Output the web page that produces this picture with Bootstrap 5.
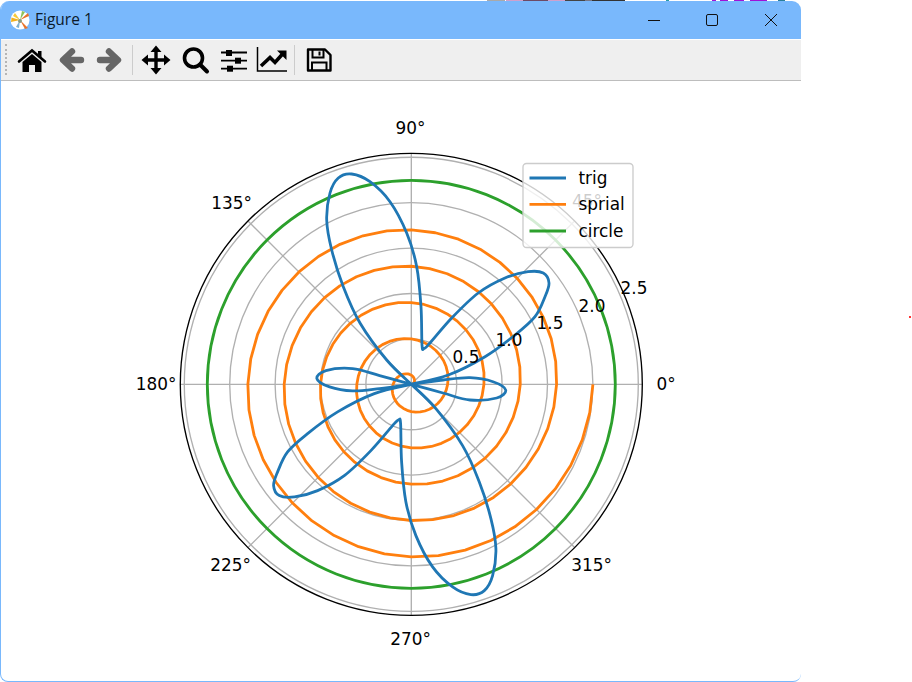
<!DOCTYPE html>
<html lang="en">
<head>
    <meta charset="UTF-8">
    <title>Figure 1</title>
    <link href="https://cdn.jsdelivr.net/npm/bootstrap@5.3.0/dist/css/bootstrap.min.css" rel="stylesheet">
    <style>
        body { margin: 0; background: #fff; overflow: hidden; }
        .desk-strip { display: block; width: 912px; height: 2px; }
        .fig-window { width: 801px; height: 681px; margin-top: -1px; position: relative; background: #fff; border-radius: 9px 9px 8px 8px; overflow: hidden; border-left: 1px solid #79b8fc; border-bottom: 1px solid #79b8fc; }
        .fig-title { height: 38px; margin-left: -1px; background: #79b8fc; font-family: "Open Sans", "Noto Sans", sans-serif; font-size: 15.5px; color: #0c1a2a; }
        .fig-logo { margin-left: 10px; margin-right: 5px; }
        .win-btn { width: 58.5px; height: 38px; }
        .win-btns { margin-right: 1px; }
        .fig-tools { height: 42px; background: #efefef; border-top: 1px solid #fff; border-bottom: 1px solid #bdbdbd; padding-left: 4px; padding-bottom: 1px; }
        .grip { width: 2px; height: 31px; margin-right: 6px; border-left: 2px dotted #b5b5b5; }
        .tool-sep { width: 1px; height: 30px; background: #ccc; flex: none; }
        .tool-icon { display: block; height: 39px; flex: none; }
        .plot-area { display: block; }
        .plot-area text { font-family: "DejaVu Sans", sans-serif; font-size: 16.9px; fill: #000; }
        .grid-line { stroke: #b0b0b0; stroke-width: 1.35; fill: none; }
        .red-speck { position: absolute; left: 909px; top: 316px; width: 2px; height: 2px; background: #f33; }
    </style>
</head>

<body>
<svg class="desk-strip" viewBox="0 0 912 2">
    <rect x="487" width="18" height="2" fill="#a9a9a9"/>
    <rect x="506" width="18" height="2" fill="#cfa0cc"/>
    <rect x="523" width="25" height="2" fill="#6d4a66"/>
    <rect x="548" width="17" height="2" fill="#cfa0cc"/>
    <rect x="565" width="20" height="2" fill="#444"/>
    <rect x="585" width="7" height="2" fill="#778"/>
    <rect x="592" width="33" height="2" fill="#333"/>
    <rect x="666" width="3" height="2" fill="#2a9aa8"/>
    <rect x="712" width="4" height="2" fill="#a012d8"/>
    <rect x="720" width="8" height="2" fill="#a012d8"/>
    <rect x="734" width="10" height="2" fill="#a012d8"/>
    <rect x="750" width="17" height="2" fill="#a012d8"/>
    <rect x="778" width="7" height="2" fill="#2a7f9a"/>
</svg>
<div class="red-speck"></div>

<div class="fig-window">
    <div class="fig-title d-flex align-items-center">
        <svg class="fig-logo" width="20" height="20" viewBox="0 0 20 20">
            <circle cx="10" cy="10" r="9.5" fill="#fff"/>
            <path d="M10 10 1.5 7.5 1 12Z" fill="#f2b01e"/>
            <path d="M10 10 5 3 3 6Z" fill="#f5c93c"/>
            <path d="M10 10 12 1 15 2Z" fill="#8fc25b"/>
            <path d="M10 10 18 3 19 6Z" fill="#e8732a"/>
            <path d="M10 10 18 18 15 19Z" fill="#e8732a"/>
            <path d="M10 10 6 17 9 18Z" fill="#7fb0d0"/>
            <circle cx="10" cy="11" r="2" fill="#8a9a80"/>
        </svg>
        <span>Figure 1</span>
        <div class="win-btns ms-auto d-flex">
            <div class="win-btn d-flex align-items-center justify-content-center">
                <svg width="14" height="14" viewBox="0 0 14 14"><path d="M1 7.5H13" stroke="#111" stroke-width="1"/></svg>
            </div>
            <div class="win-btn d-flex align-items-center justify-content-center">
                <svg width="14" height="14" viewBox="0 0 14 14"><rect x="1.5" y="1.5" width="11" height="11" rx="1.5" fill="none" stroke="#111" stroke-width="1"/></svg>
            </div>
            <div class="win-btn d-flex align-items-center justify-content-center">
                <svg width="14" height="14" viewBox="0 0 14 14"><path d="M1 1 13 13M13 1 1 13" stroke="#111" stroke-width="1"/></svg>
            </div>
        </div>
    </div>

    <div class="fig-tools d-flex align-items-center">
        <div class="grip"></div>
        <svg class="tool-icon" width="38" viewBox="13 41 38 39">
            <path d="M19 62.5 32 51.5 45 62.5" fill="none" stroke="#000" stroke-width="2.6" stroke-linecap="round"/>
            <path d="M38 52h3.5v6.5L38 55.5Z" fill="#000"/>
            <path d="M32 55 41.5 63V73H35V66H29V73H22.5V63Z" fill="#000"/>
        </svg>
        <svg class="tool-icon" width="39" viewBox="51 41 39 39">
            <path d="M81 61H64M72 52.5 63 61 72 69.5" fill="none" stroke="#666" stroke-width="6.4" stroke-linecap="round" stroke-linejoin="round"/>
        </svg>
        <svg class="tool-icon" width="42" viewBox="90 41 42 39">
            <path d="M100 61H117M109 52.5 118 61 109 69.5" fill="none" stroke="#666" stroke-width="6.4" stroke-linecap="round" stroke-linejoin="round"/>
        </svg>
        <div class="tool-sep"></div>
        <svg class="tool-icon" width="42" viewBox="133 41 42 39">
            <path d="M156 50V72M145 61H167" stroke="#000" stroke-width="3.4"/>
            <path d="M156 46.5 161.5 53H150.5ZM156 75.5 161.5 69H150.5ZM141.5 61 148 55.5V66.5ZM170.5 61 164 55.5V66.5Z" fill="#000"/>
        </svg>
        <svg class="tool-icon" width="39" viewBox="175 41 39 39">
            <circle cx="193.5" cy="59" r="9" fill="none" stroke="#000" stroke-width="3.6"/>
            <path d="M200 65.5 207 72.5" stroke="#000" stroke-width="4" stroke-linecap="round"/>
        </svg>
        <svg class="tool-icon" width="39" viewBox="214 41 39 39">
            <path d="M221 53.5H247M221 61.7H247M221 69.7H247" stroke="#000" stroke-width="1.8"/>
            <rect x="226" y="51" width="6" height="6" fill="#000"/>
            <rect x="235" y="58.7" width="6" height="6" fill="#000"/>
            <rect x="227" y="66.7" width="6" height="6" fill="#000"/>
        </svg>
        <svg class="tool-icon" width="41" viewBox="253 41 41 39">
            <path d="M257.5 48V72H287" fill="none" stroke="#000" stroke-width="1.5"/>
            <path d="M261 67 270 58.5 275 63.5 283 54.5" fill="none" stroke="#000" stroke-width="3.6"/>
            <path d="M277 51.5H286.5V61Z" fill="#000"/>
        </svg>
        <div class="tool-sep"></div>
        <svg class="tool-icon" width="38" viewBox="295 41 38 39">
            <path d="M308 50.5H325L330.5 56V71.5H308Z" fill="none" stroke="#000" stroke-width="2.4" stroke-linejoin="round"/>
            <path d="M312.5 51V58.5H323.5V51M319.5 52.5V56.5" fill="none" stroke="#000" stroke-width="2"/>
            <path d="M312 71V63.5H326.5V71" fill="none" stroke="#000" stroke-width="2"/>
        </svg>
    </div>

    <svg class="plot-area" width="800" height="599" viewBox="1 81 800 599">
        <g class="grid-line">
            <circle cx="411.3" cy="384.3" r="45.4"/>
            <circle cx="411.3" cy="384.3" r="90.8"/>
            <circle cx="411.3" cy="384.3" r="136.2"/>
            <circle cx="411.3" cy="384.3" r="181.6"/>
            <circle cx="411.3" cy="384.3" r="227"/>
            <path d="M180.3 384.3H642.3M411.3 153.3V615.3M248 221 574.6 547.6M248 547.6 574.6 221"/>
        </g>
        <circle cx="411.3" cy="384.3" r="204" fill="none" stroke="#2ca02c" stroke-width="2.8"/>
        <path id="spiral" fill="none" stroke="#ff7f0e" stroke-width="2.8" stroke-linejoin="round"/>
        <path id="trig" fill="none" stroke="#1f77b4" stroke-width="2.8" stroke-linejoin="round"/>
        <circle cx="411.3" cy="384.3" r="231" fill="none" stroke="#000" stroke-width="1.35"/>

        <text x="410.5" y="134" text-anchor="middle">90°</text>
        <text x="231.5" y="209" text-anchor="middle">135°</text>
        <text x="156" y="390" text-anchor="middle">180°</text>
        <text x="230.5" y="571" text-anchor="middle">225°</text>
        <text x="410.5" y="645" text-anchor="middle">270°</text>
        <text x="591.5" y="571" text-anchor="middle">315°</text>
        <text x="587" y="207" text-anchor="middle">45°</text>
        <text x="666" y="390" text-anchor="middle">0°</text>
        <text x="466" y="363" text-anchor="middle">0.5</text>
        <text x="509" y="345.5" text-anchor="middle">1.0</text>
        <text x="550" y="329" text-anchor="middle">1.5</text>
        <text x="592" y="311.5" text-anchor="middle">2.0</text>
        <text x="634" y="294" text-anchor="middle">2.5</text>

        <rect x="523" y="163.5" width="110" height="84" rx="3.5" fill="#fff" fill-opacity="0.8" stroke="#ccc" stroke-width="1.35"/>
        <path d="M529.5 178H566" stroke="#1f77b4" stroke-width="2.8"/>
        <path d="M529.5 204.3H566" stroke="#ff7f0e" stroke-width="2.8"/>
        <path d="M529.5 231H566" stroke="#2ca02c" stroke-width="2.8"/>
        <text x="578.5" y="184">trig</text>
        <text x="578.5" y="210">sprial</text>
        <text x="578.5" y="237">circle</text>
    </svg>
</div>

<script>
    // spiral: r = 0..2, five turns, 200 steps as plotted
    const cx = 411.3, cy = 384.3, unit = 90.8;
    let spiral = '';
    for (let i = 0; i <= 200; i++) {
        const r = i * 0.01;
        const t = r * 5 * Math.PI;
        spiral += (i ? 'L' : 'M') + (cx + r * unit * Math.cos(t)).toFixed(2) + ' ' + (cy - r * unit * Math.sin(t)).toFixed(2);
    }
    document.getElementById('spiral').setAttribute('d', spiral);

    // half of the trig curve, the other half is the same turned 180 degrees
    const half = [[411.3,384.3],[386.7,360],[360,323],[343.3,286.7],[331.7,250],[326.7,220],[330,193],[338.3,178],[351.7,174],
        [370,181.7],[390,201.7],[406.7,233],[416.7,266.7],[421,306.7],[422,345],[424,348.7],[430,343],[451.7,318],[478.3,293],
        [505,278],[528,271.7],[543.3,273],[549,283],[545,296.7],[535,316.7],[515,335],[485,356.7],[448.3,375],[411.3,384.3],
        [443,380],[470,377.7],[493,381.7],[505.7,390],[496.7,398],[470,400],[443,393],[411.3,384.3]];
    const pts = half.concat(half.slice(1).map(p => [2 * cx - p[0], 2 * cy - p[1]]));
    const atCentre = p => p[0] === cx && p[1] === cy;
    let trig = 'M' + pts[0][0] + ' ' + pts[0][1];
    for (let i = 0; i < pts.length - 1; i++) {
        const b = pts[i], c = pts[i + 1];
        // the curve leaves and enters the centre at a sharp point, so no tangent runs through it
        const a = atCentre(b) ? b : pts[i - 1];
        const d = atCentre(c) ? c : pts[i + 2];
        trig += 'C' + (b[0] + (c[0] - a[0]) / 6).toFixed(2) + ' ' + (b[1] + (c[1] - a[1]) / 6).toFixed(2) + ' ' +
            (c[0] - (d[0] - b[0]) / 6).toFixed(2) + ' ' + (c[1] - (d[1] - b[1]) / 6).toFixed(2) + ' ' + c[0] + ' ' + c[1];
    }
    document.getElementById('trig').setAttribute('d', trig);
</script>
<script src="https://cdn.jsdelivr.net/npm/bootstrap@5.3.0/dist/js/bootstrap.bundle.min.js"></script>
</body>
</html>
